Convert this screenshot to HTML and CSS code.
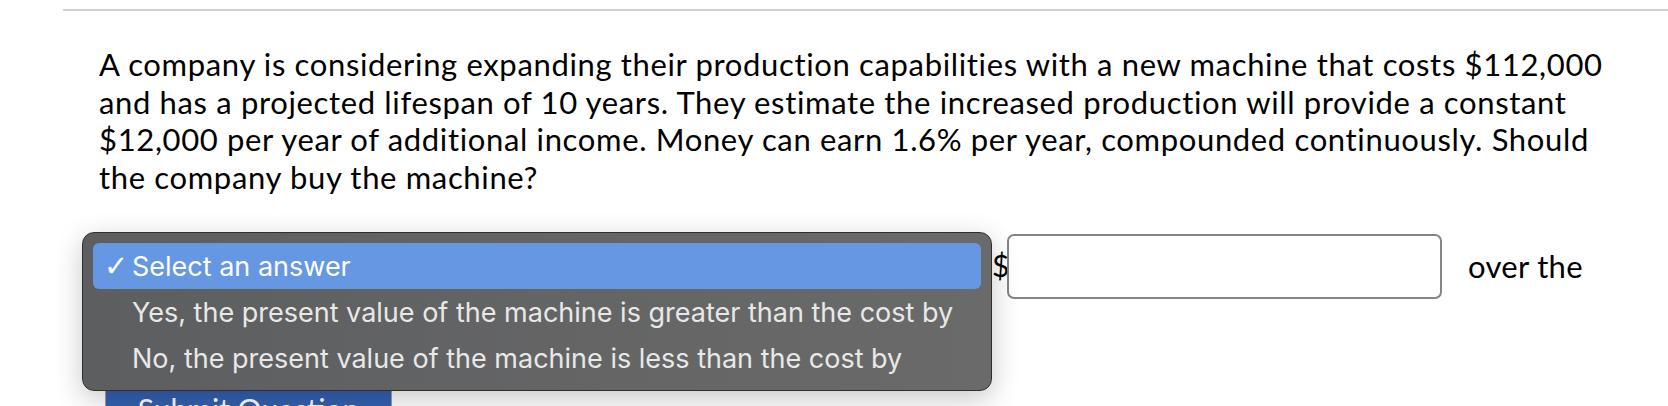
FILE: index.html
```html
<!DOCTYPE html>
<html lang="en">
<head>
  <meta charset="UTF-8">
  <title>Question</title>
  <link rel="stylesheet" href="styles.css">
</head>
<body>
  <div class="question">
    <p class="prompt">A company is considering expanding their production capabilities with a new machine that costs $112,000 and has a projected lifespan of 10 years. They estimate the increased production will provide a constant $12,000 per year of additional income. Money can earn 1.6% per year, compounded continuously. Should the company buy the machine?</p>

    <div class="answer-row">
      <div class="select-wrap">
        <div class="menu">
          <div class="option selected"><span class="check">✓</span>Select an answer</div>
          <div class="option"><span class="check"></span>Yes, the present value of the machine is greater than the cost by</div>
          <div class="option"><span class="check"></span>No, the present value of the machine is less than the cost by</div>
        </div>
      </div>
      <span class="dollar">$</span>
      <input type="text" class="amount">
      <span class="tail">over the</span>
    </div>

    <div class="submit-row">
      <button class="submit">Submit Question</button>
    </div>
  </div>
</body>
</html>
```

FILE: styles.css
```css
html, body {
  height: 406px;
}

body {
  margin: 0;
  background-color: #fff;
  font-family: Lato, 'Noto Sans', sans-serif;
  color: #000;
  overflow: hidden;
}

.question {
  margin-left: 63px;
  margin-top: 9px;
  border-top: 2px solid #d0d0d0;
}

.prompt {
  margin: 35px 0 0 36px;
  width: 1520px;
  font-size: 31px;
  letter-spacing: 0.65px;
  line-height: 37.5px;
}

.answer-row {
  display: flex;
  align-items: flex-start;
  margin-top: 37px;
  margin-left: 19px;
}

.select-wrap {
  position: relative;
  width: 910px;
  height: 65px;
}

.menu {
  position: absolute;
  top: -1px;
  left: 0;
  width: 908px;
  height: 157px;
  background: linear-gradient(to right, #5d5e60, #6a6a6a);
  border: 1px solid #2f2f2f;
  border-radius: 12px;
  box-shadow: 0 8px 28px rgba(0,0,0,0.22);
  z-index: 2;
}

.option {
  display: flex;
  align-items: center;
  margin: 0 10px;
  height: 46px;
  padding-left: 11px;
  font-family: Inter, 'Liberation Sans', sans-serif;
  font-size: 27px;
  color: #e8e8e8;
  border-radius: 6px;
}

.option.selected {
  margin-top: 10px;
  background-color: #6597e3;
  color: #fff;
}

.check {
  display: inline-block;
  width: 28px;
  font-family: 'DejaVu Sans', sans-serif;
  font-size: 29px;
}

.dollar {
  font-size: 30px;
  line-height: 30px;
  margin-top: 17px;
  width: 15px;
}

.amount {
  width: 435px;
  height: 65px;
  box-sizing: border-box;
  margin: 1px 0 0 0;
  border: 2px solid #858585;
  border-radius: 7px;
  font-size: 24px;
  padding: 0 10px;
}

.tail {
  margin-left: 26px;
  font-size: 31px;
  letter-spacing: 0.3px;
  line-height: 30px;
  margin-top: 18px;
}

.submit-row {
  margin-left: 42px;
  margin-top: 82px;
}

.submit {
  width: 287px;
  height: 56px;
  background-color: #3461b0;
  color: #fff;
  border: 1px solid #a0a0a0;
  border-top: 0;
  font-family: Lato, 'Noto Sans', sans-serif;
  font-size: 30px;
  padding: 0;
}
```
